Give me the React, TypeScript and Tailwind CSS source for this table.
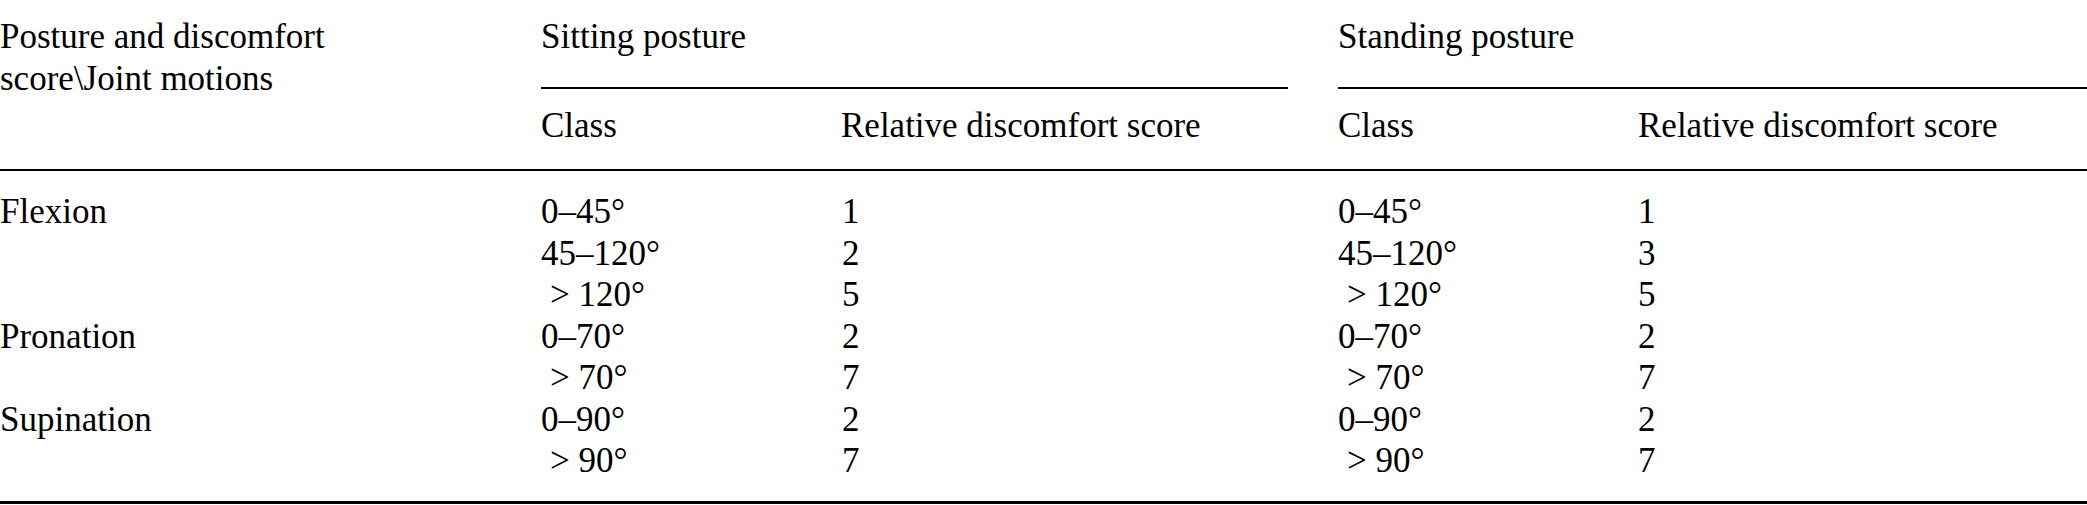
const rows = [
  { motion: "Flexion", cls: "0–45°", sit: "1", stand: "1", gt: false },
  { motion: "", cls: "45–120°", sit: "2", stand: "3", gt: false },
  { motion: "", cls: "> 120°", sit: "5", stand: "5", gt: true },
  { motion: "Pronation", cls: "0–70°", sit: "2", stand: "2", gt: false },
  { motion: "", cls: "> 70°", sit: "7", stand: "7", gt: true },
  { motion: "Supination", cls: "0–90°", sit: "2", stand: "2", gt: false },
  { motion: "", cls: "> 90°", sit: "7", stand: "7", gt: true },
];

function Group({ title }: { title: string }) {
  return (
    <div className="flex flex-col">
      <div className="pt-[16px] leading-[42px]">{title}</div>
      <div className="mt-[29px] border-t-2 border-black" />
      <div className="mt-[16px] flex leading-[42px]">
        <div className="w-[300px]">Class</div>
        <div>Relative discomfort score</div>
      </div>
    </div>
  );
}

export default function App() {
  return (
    <div className="w-[2087px] overflow-hidden bg-white font-['Liberation_Serif',serif] text-[35px] text-black">
      <div className="grid grid-cols-[541px_747px_50px_1fr] border-b-2 border-black pb-[22px]">
        <div className="pt-[16px] leading-[42px]">
          <div>Posture and discomfort</div>
          <div>score\Joint motions</div>
        </div>
        <Group title="Sitting posture" />
        <div />
        <Group title="Standing posture" />
      </div>
      <div className="border-b-[3px] border-black pt-[20px] pb-[19px]">
        {rows.map((r, i) => (
          <div key={i} className="grid grid-cols-[541px_301px_496px_300px_1fr] leading-[41.5px]">
            <div>{r.motion}</div>
            <div className={r.gt ? "pl-[9px]" : ""}>{r.cls}</div>
            <div>{r.sit}</div>
            <div className={r.gt ? "pl-[9px]" : ""}>{r.cls}</div>
            <div>{r.stand}</div>
          </div>
        ))}
      </div>
    </div>
  );
}
